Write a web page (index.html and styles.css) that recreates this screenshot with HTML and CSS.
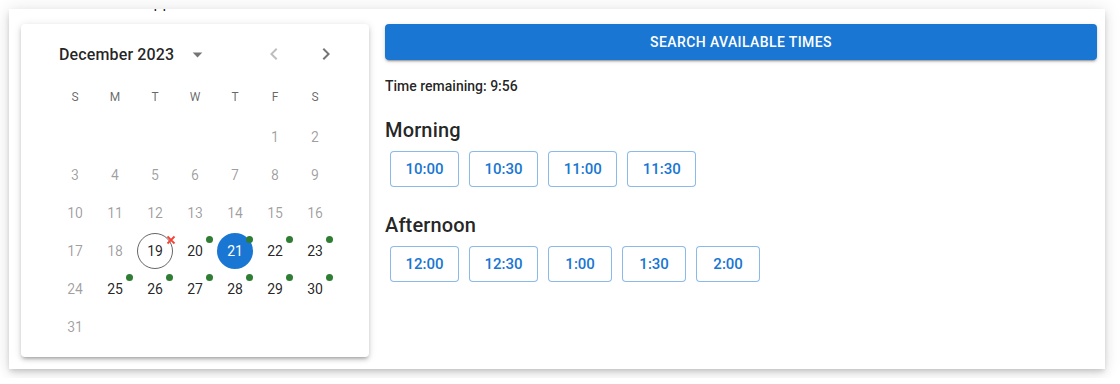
FILE: index.html
```html
<!DOCTYPE html>
<html lang="en">
<head>
<meta charset="utf-8">
<title>Appointment</title>
<link rel="stylesheet" href="styles.css">
</head>
<body>
<div class="paper">
  <div class="peek"><span>Appointment</span></div>
  <div class="content">
    <div class="cal-card">
      <div class="cal">
        <div class="cal-header">
          <div class="label">December 2023</div>
          <button class="view-btn" aria-label="switch view">
            <svg viewBox="0 0 24 24" width="23" height="23"><path d="M7 10l5 5 5-5z"/></svg>
          </button>
          <div class="arrows">
            <button class="arrow disabled" aria-label="previous month">
              <svg viewBox="0 0 24 24" width="24" height="24"><path d="M15.41 16.59L10.83 12l4.58-4.59L14 6l-6 6 6 6 1.41-1.41z"/></svg>
            </button>
            <button class="arrow" aria-label="next month">
              <svg viewBox="0 0 24 24" width="24" height="24"><path d="M8.59 16.59L13.17 12 8.59 7.41 10 6l6 6-6 6-1.41-1.41z"/></svg>
            </button>
          </div>
        </div>
        <div class="weekdays">
          <span>S</span><span>M</span><span>T</span><span>W</span><span>T</span><span>F</span><span>S</span>
        </div>
        <div class="days">
          <span class="cell"></span><span class="cell"></span><span class="cell"></span><span class="cell"></span><span class="cell"></span>
          <span class="cell"><span class="day off">1</span></span>
          <span class="cell"><span class="day off">2</span></span>

          <span class="cell"><span class="day off">3</span></span>
          <span class="cell"><span class="day off">4</span></span>
          <span class="cell"><span class="day off">5</span></span>
          <span class="cell"><span class="day off">6</span></span>
          <span class="cell"><span class="day off">7</span></span>
          <span class="cell"><span class="day off">8</span></span>
          <span class="cell"><span class="day off">9</span></span>

          <span class="cell"><span class="day off">10</span></span>
          <span class="cell"><span class="day off">11</span></span>
          <span class="cell"><span class="day off">12</span></span>
          <span class="cell"><span class="day off">13</span></span>
          <span class="cell"><span class="day off">14</span></span>
          <span class="cell"><span class="day off">15</span></span>
          <span class="cell"><span class="day off">16</span></span>

          <span class="cell"><span class="day off">17</span></span>
          <span class="cell"><span class="day off">18</span></span>
          <span class="cell"><span class="day today">19<svg class="cross" viewBox="0 0 10 10" width="10" height="10"><path d="M1.5 1.5L8.5 8.5M8.5 1.5L1.5 8.5"/></svg></span></span>
          <span class="cell"><span class="day">20<i class="dot"></i></span></span>
          <span class="cell"><span class="day selected">21<i class="dot"></i></span></span>
          <span class="cell"><span class="day">22<i class="dot"></i></span></span>
          <span class="cell"><span class="day">23<i class="dot"></i></span></span>

          <span class="cell"><span class="day off">24</span></span>
          <span class="cell"><span class="day">25<i class="dot"></i></span></span>
          <span class="cell"><span class="day">26<i class="dot"></i></span></span>
          <span class="cell"><span class="day">27<i class="dot"></i></span></span>
          <span class="cell"><span class="day">28<i class="dot"></i></span></span>
          <span class="cell"><span class="day">29<i class="dot"></i></span></span>
          <span class="cell"><span class="day">30<i class="dot"></i></span></span>

          <span class="cell"><span class="day off">31</span></span>
        </div>
      </div>
    </div>
    <div class="right">
      <button class="search">Search available times</button>
      <p class="timer">Time remaining: 9:56</p>
      <h6 class="period">Morning</h6>
      <div class="slots">
        <button class="slot">10:00</button>
        <button class="slot">10:30</button>
        <button class="slot">11:00</button>
        <button class="slot">11:30</button>
      </div>
      <h6 class="period period-next">Afternoon</h6>
      <div class="slots">
        <button class="slot">12:00</button>
        <button class="slot">12:30</button>
        <button class="slot">1:00</button>
        <button class="slot">1:30</button>
        <button class="slot">2:00</button>
      </div>
    </div>
  </div>
</div>
</body>
</html>
```

FILE: styles.css
```css
* { box-sizing: border-box; }

body {
  margin: 0;
  padding: 9px;
  background: #ffffff;
  font-family: Roboto, "Liberation Sans", sans-serif;
  color: rgba(0, 0, 0, 0.87);
}

button {
  font-family: inherit;
  cursor: pointer;
}

.paper {
  width: 1096px;
  height: 360px;
  background: #fff;
  padding: 0 8px 0 12px;
  box-shadow: 0 3px 5px -1px rgba(0,0,0,0.14), 0 5px 10px 0 rgba(0,0,0,0.08), 0 0 16px 1px rgba(0,0,0,0.09);
}

.peek {
  height: 4px;
  overflow: hidden;
  padding-left: 122px;
}

.peek span {
  display: block;
  font-size: 16px;
  line-height: 16px;
  margin-top: -14px;
  color: rgba(0, 0, 0, 0.87);
}

.content {
  display: flex;
  gap: 16px;
  margin-top: 11px;
}

/* calendar */
.cal-card {
  width: 348px;
  height: 333px;
  flex: none;
  background: #fff;
  border-radius: 4px;
  box-shadow: 0 3px 3px -2px rgba(0,0,0,0.2), 0 3px 4px 0 rgba(0,0,0,0.14), 0 1px 8px 0 rgba(0,0,0,0.12);
}

.cal {
  width: 320px;
  margin: 0 auto;
}

.cal-header {
  display: flex;
  align-items: center;
  height: 30px;
  margin-top: 15px;
  margin-bottom: 8px;
  padding-left: 24px;
  padding-right: 15px;
}

.label {
  font-size: 16px;
  font-weight: 500;
  letter-spacing: 0.009em;
}

.view-btn,
.arrow {
  width: 28px;
  height: 28px;
  padding: 0;
  border: 0;
  background: none;
  display: flex;
  align-items: center;
  justify-content: center;
}

.view-btn {
  margin-left: 9px;
  fill: rgba(0, 0, 0, 0.54);
}

.arrows {
  margin-left: auto;
  display: flex;
  gap: 24px;
}

.arrow { fill: rgba(0, 0, 0, 0.54); }
.arrow.disabled { fill: rgba(0, 0, 0, 0.26); }

.weekdays {
  display: flex;
  justify-content: center;
}

.weekdays span {
  width: 36px;
  height: 40px;
  margin: 0 2px;
  display: flex;
  align-items: center;
  justify-content: center;
  font-size: 12px;
  color: rgba(0, 0, 0, 0.6);
}

.days {
  display: grid;
  grid-template-columns: repeat(7, 40px);
  grid-auto-rows: 38px;
  justify-content: center;
  padding-top: 1px;
}

.cell {
  display: flex;
  align-items: center;
  justify-content: center;
}

.day {
  position: relative;
  width: 36px;
  height: 36px;
  border-radius: 50%;
  display: flex;
  align-items: center;
  justify-content: center;
  font-size: 14px;
  color: rgba(0, 0, 0, 0.87);
}

.day.off { color: rgba(0, 0, 0, 0.38); }

.day.today { border: 1px solid rgba(0, 0, 0, 0.6); }

.day.selected {
  background: #1976d2;
  color: #fff;
}

.dot {
  position: absolute;
  left: 28.5px;
  top: 2.5px;
  width: 7px;
  height: 7px;
  border-radius: 50%;
  background: #2e7d32;
}

.cross {
  position: absolute;
  left: 27.5px;
  top: 0.5px;
  stroke: #f44336;
  stroke-width: 1.8;
  fill: none;
}

/* right side */
.right {
  flex: 1;
  display: flex;
  flex-direction: column;
}

.search {
  height: 36px;
  border: 0;
  border-radius: 4px;
  background: #1976d2;
  color: #fff;
  font-size: 14px;
  font-weight: 500;
  letter-spacing: 0.02857em;
  text-transform: uppercase;
  box-shadow: 0 3px 1px -2px rgba(0,0,0,0.2), 0 2px 2px 0 rgba(0,0,0,0.14), 0 1px 5px 0 rgba(0,0,0,0.12);
}

.timer {
  margin: 16px 0 0;
  font-size: 14px;
  font-weight: 500;
  line-height: 20px;
}

.period {
  margin: 18px 0 0;
  font-size: 20px;
  font-weight: 500;
  line-height: 32px;
  letter-spacing: 0.0075em;
}

.period-next { margin-top: 17px; }

.slots {
  display: flex;
  flex-wrap: wrap;
}

.slot {
  margin: 5px;
  height: 36px;
  min-width: 64px;
  padding: 5px 14.5px;
  border: 1px solid rgba(25, 118, 210, 0.5);
  border-radius: 4px;
  background: #fff;
  color: #1976d2;
  font-size: 15px;
  font-weight: 500;
  line-height: 24px;
}
```
